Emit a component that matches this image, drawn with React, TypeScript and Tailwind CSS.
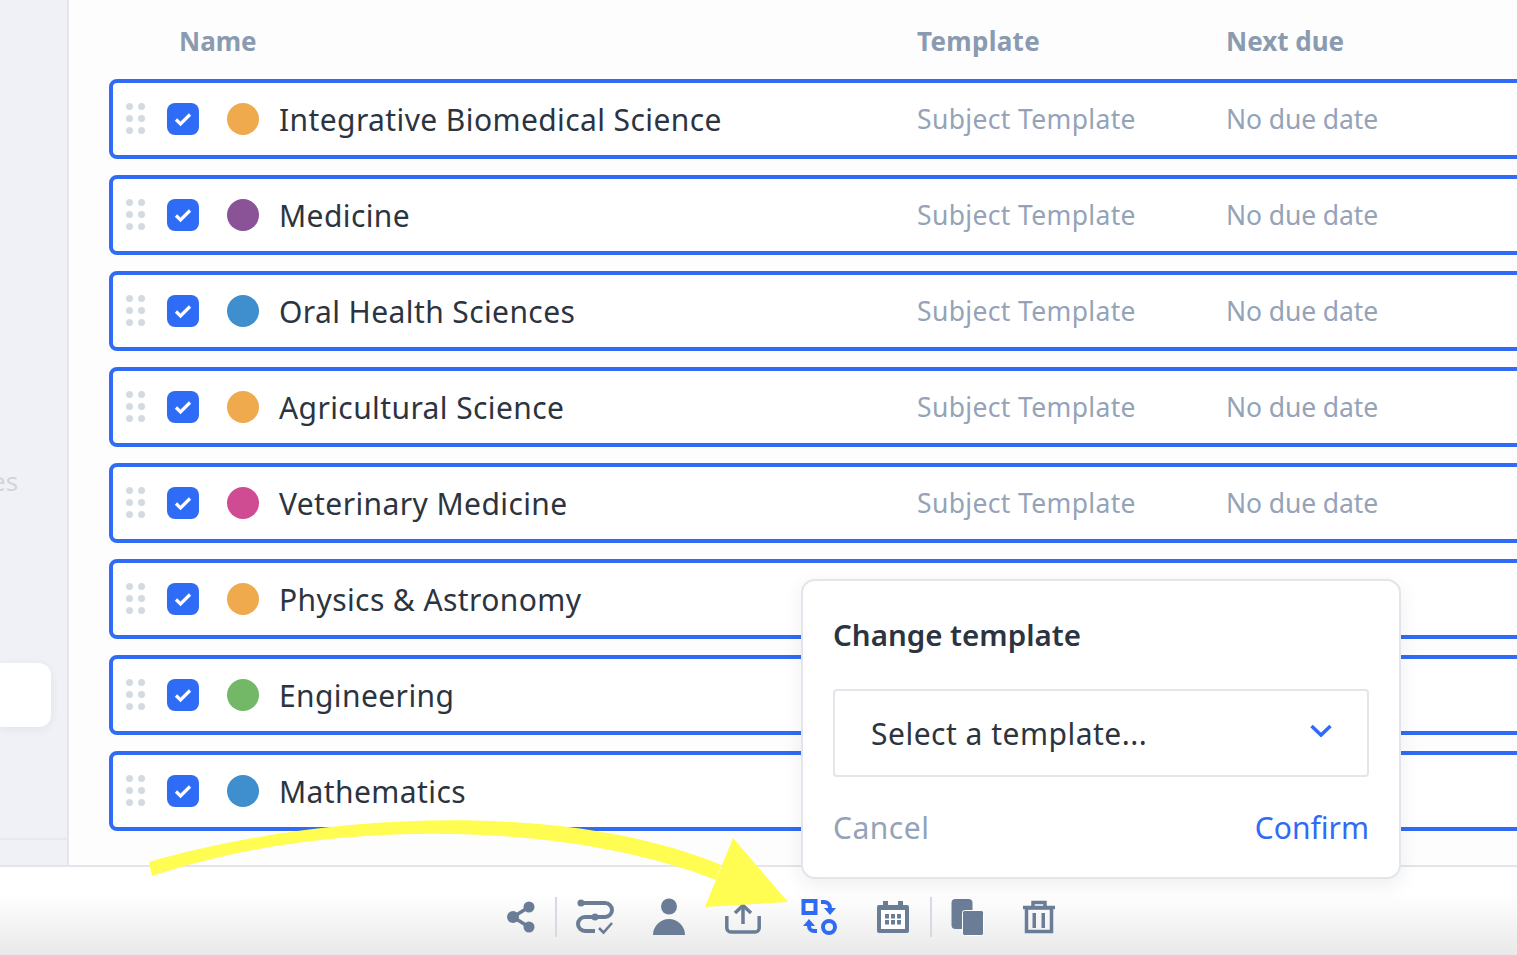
const rows = [
  { name: "Integrative Biomedical Science", color: "bg-[#eeaa4d]" },
  { name: "Medicine", color: "bg-[#8a5297]" },
  { name: "Oral Health Sciences", color: "bg-[#3f8fcf]" },
  { name: "Agricultural Science", color: "bg-[#eeaa4d]" },
  { name: "Veterinary Medicine", color: "bg-[#cf4c93]" },
  { name: "Physics & Astronomy", color: "bg-[#eeaa4d]" },
  { name: "Engineering", color: "bg-[#72b866]" },
  { name: "Mathematics", color: "bg-[#3f8fcf]" },
];

const font = { fontFamily: '"Noto Sans", sans-serif' };

function Grip() {
  return (
    <div className="grid grid-cols-2 gap-x-[5px] gap-y-[5px] w-[19px] shrink-0 -mt-[1px]">
      {[0, 1, 2, 3, 4, 5].map((i) => (
        <span key={i} className="w-[7px] h-[7px] rounded-full bg-[#d5d9e2]" />
      ))}
    </div>
  );
}

function Row({ name, color }: { name: string; color: string }) {
  return (
    <div className="flex items-center h-[80px] w-[1500px] ml-[40px] mb-[16px] border-[4px] border-[#2f6bf5] rounded-[8px] bg-white pl-[13px] shrink-0">
      <Grip />
      <div className="ml-[22px] w-[32px] h-[32px] rounded-[8px] bg-[#2f6bf5] flex items-center justify-center shrink-0">
        <svg width="20" height="20" viewBox="0 0 20 20" fill="none" stroke="white" strokeWidth="3.2">
          <path d="M3 10.500l4.500 4.500L17 5.500" />
        </svg>
      </div>
      <span className={`ml-[28px] w-[32px] h-[32px] rounded-full shrink-0 ${color}`} />
      <div className="ml-[20px] w-[638px] text-[30px] tracking-[0.4px] text-[#2b3440] whitespace-nowrap shrink-0">{name}</div>
      <div className="w-[310px] pt-[2px] text-[26.5px] tracking-[0.35px] text-[#94a3b8] whitespace-nowrap shrink-0">Subject Template</div>
      <div className="-ml-[1px] pt-[2px] text-[26.5px] tracking-[-0.1px] text-[#94a3b8] whitespace-nowrap">No due date</div>
    </div>
  );
}

const slate = "#6b7d96";

const ShareIcon = () => (
  <svg width="40" height="40" viewBox="-1 0 40 40" fill={slate} stroke={slate}>
    <circle cx="28" cy="10" r="5.500" stroke="none" />
    <circle cx="12" cy="20" r="6" stroke="none" />
    <circle cx="28" cy="30" r="5.500" stroke="none" />
    <path d="M28 10L12 20L28 30" fill="none" strokeWidth="3.500" />
  </svg>
);
const RouteIcon = () => (
  <svg width="40" height="40" viewBox="0 0 40 40" fill="none" stroke={slate}>
    <path d="M6 6H30a7 7 0 0 1 0 14H10a7 7 0 0 0 0 14H20" strokeWidth="4" />
    <circle cx="6" cy="6" r="3.500" fill={slate} stroke="none" />
    <circle cx="20" cy="20" r="3.500" fill={slate} stroke="none" />
    <path d="M24 31l4.500 4.500L37 26" strokeWidth="2.600" />
  </svg>
);
const PersonIcon = () => (
  <svg width="40" height="40" viewBox="0 0 40 40" fill={slate}>
    <circle cx="20" cy="9.500" r="8" />
    <path d="M4 38a16 16 0 0 1 32 0z" />
  </svg>
);
const UploadIcon = () => (
  <svg width="40" height="40" viewBox="0 0 40 40" fill="none" stroke={slate} strokeWidth="3.500">
    <path d="M3.800 19v12a4 4 0 0 0 4 4h24.400a4 4 0 0 0 4-4V19" />
    <path d="M20 27V10" />
    <path d="M12 16l8-7.500 8 7.500" />
  </svg>
);
const SwapIcon = () => (
  <svg width="40" height="40" viewBox="-1 0 40 40" fill="none" stroke="#2f6bf5" strokeWidth="4">
    <rect x="4.500" y="4" width="12" height="12" />
    <path d="M22 5h3a6 6 0 0 1 6 6v2" />
    <path d="M25 11h12l-6 7z" fill="#2f6bf5" stroke="none" />
    <circle cx="30" cy="30" r="6" />
    <path d="M18 34h-3a5 5 0 0 1-5-5v-2" />
    <path d="M4 29h12l-6-7z" fill="#2f6bf5" stroke="none" />
  </svg>
);
const CalendarIcon = () => (
  <svg width="40" height="40" viewBox="0 0 40 40" fill={slate}>
    <rect x="10" y="4" width="5" height="6" />
    <rect x="25" y="4" width="5" height="6" />
    <rect x="4" y="8" width="32" height="28" rx="2" />
    <rect x="8" y="13" width="24" height="19" fill="white" />
    {[12, 18, 24].map((x) =>
      [17, 23].map((y) => <rect key={`${x}-${y}`} x={x} y={y} width="4" height="4.500" />)
    )}
  </svg>
);
const CopyIcon = () => (
  <svg width="40" height="40" viewBox="0 0 40 40" fill={slate}>
    <rect x="4.500" y="2" width="21" height="30" rx="4" />
    <rect x="15.500" y="13.500" width="21" height="25" rx="2" stroke="white" strokeWidth="1" />
  </svg>
);
const TrashIcon = () => (
  <svg width="40" height="40" viewBox="0 0 40 40" fill="none" stroke={slate} strokeWidth="3.500">
    <path d="M14 9V5.500h12V9" />
    <path d="M4 10.500h32" />
    <rect x="7.500" y="11" width="25" height="23.500" />
    <rect x="13.500" y="16" width="3.500" height="15" fill={slate} stroke="none" />
    <rect x="22.500" y="16" width="3.500" height="15" fill={slate} stroke="none" />
  </svg>
);

function Btn({ w, children }: { w: string; children: React.ReactNode }) {
  return <div className={`flex items-center justify-center h-[40px] shrink-0 ${w}`}>{children}</div>;
}

export default function App() {
  return (
    <div className="relative h-[955px] w-[1517px] overflow-hidden flex flex-col bg-white" style={font}>
      <div className="flex flex-1 min-h-0">
        <aside className="w-[69px] shrink-0 bg-[#f0f1f6] border-r-[2px] border-[#e4e6ec] flex flex-col overflow-hidden">
          <div className="h-[461px] shrink-0" />
          <div className="text-[26px] leading-[40px] text-[#d2d4da] -ml-[9px]">es</div>
          <div className="mt-[162px] w-[51px] h-[64px] bg-white rounded-r-[12px] shadow-[0_2px_10px_rgba(30,40,70,0.07)] shrink-0" />
          <div className="mt-[111px] border-t-[2px] border-[#e7e8ed] flex-1" />
        </aside>
        <main className="flex-1 min-w-0 flex flex-col overflow-hidden bg-[#fdfdfe]">
          <div className="h-[79px] shrink-0 flex items-center text-[26px] font-bold text-[#8a9bb0] pt-[3px]">
            <div className="ml-[110px] w-[738px]">Name</div>
            <div className="w-[309px] tracking-[0.3px]">Template</div>
            <div className="tracking-[0px]">Next due</div>
          </div>
          {rows.map((r) => (
            <Row key={r.name} name={r.name} color={r.color} />
          ))}
        </main>
      </div>
      <footer className="h-[90px] shrink-0 border-t-[2px] border-[#e3e5ea] bg-gradient-to-b from-white from-30% to-[#e9e9e9] flex items-start pt-[30px] pl-[484px]">
        <Btn w="w-[71px]"><ShareIcon /></Btn>
        <div className="w-[2px] h-[40px] bg-[#d5dae3] shrink-0" />
        <Btn w="w-[75px]"><RouteIcon /></Btn>
        <Btn w="w-[74px]"><PersonIcon /></Btn>
        <Btn w="w-[74px]"><UploadIcon /></Btn>
        <Btn w="w-[76px]"><SwapIcon /></Btn>
        <Btn w="w-[74px]"><CalendarIcon /></Btn>
        <div className="w-[2px] h-[40px] bg-[#d5dae3] shrink-0" />
        <Btn w="w-[70px]"><CopyIcon /></Btn>
        <Btn w="w-[74px]"><TrashIcon /></Btn>
      </footer>

      <div className="absolute left-[801px] top-[579px] w-[600px] h-[300px] bg-white border-[2px] border-[#e3e5ea] rounded-[14px] shadow-[0_6px_20px_rgba(30,40,70,0.08)] px-[30px] flex flex-col">
        <div className="mt-[32px] h-[44px] flex items-center text-[29.500px] font-semibold text-[#2b3440] whitespace-nowrap">Change template</div>
        <div className="mt-[32px] h-[88px] border-[2px] border-[#e3e5ea] rounded-[4px] flex items-center justify-between pl-[36px] pr-[34px]">
          <span className="text-[30px] tracking-[0.5px] text-[#2b3440] whitespace-nowrap">Select a template...</span>
          <svg className="-mt-[4px]" width="24" height="24" viewBox="0 0 24 24" fill="none" stroke="#2f6bf5" strokeWidth="3.500">
            <path d="M2.500 7l9.500 9 9.500-9" />
          </svg>
        </div>
        <div className="mt-[29px] flex justify-between text-[30px] leading-[44px]">
          <span className="text-[#94a3b8] tracking-[0.5px]">Cancel</span>
          <span className="text-[#2f6bf5]">Confirm</span>
        </div>
      </div>

      <svg className="absolute left-0 top-0 pointer-events-none" width="1517" height="955" fill="#fffc52">
        <path d="M149 862C330 810 570 802 721 865L716 880C570 822 330 816 152 876Z" />
        <path d="M733 838L788 902L705 907Z" />
      </svg>
    </div>
  );
}
